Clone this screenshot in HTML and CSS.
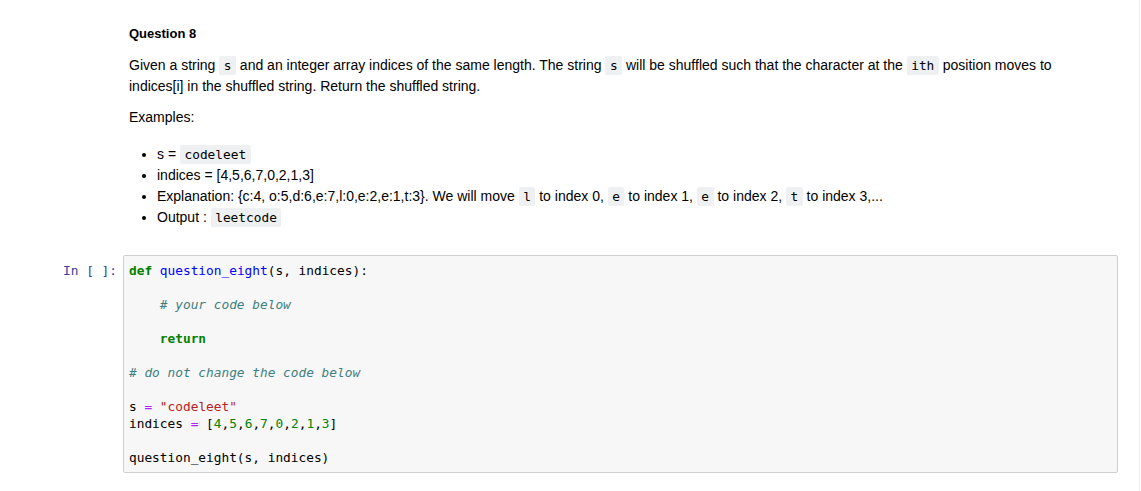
FILE: index.html
```html
<!DOCTYPE html>
<html>
<head>
<meta charset="utf-8">
<link rel="stylesheet" href="styles.css">
</head>
<body>
<div class="notebook">
  <div class="cell text-cell">
    <div class="prompt"></div>
    <div class="rendered">
      <h4 class="q-title">Question 8</h4>
      <p class="para">Given a string <code>s</code> and an integer array indices of the same length. The string <code>s</code> will be shuffled such that the character at the <code>ith</code> position moves to indices[i] in the shuffled string. Return the shuffled string.</p>
      <p class="para">Examples:</p>
      <ul class="examples">
        <li>s = <code>codeleet</code></li>
        <li>indices = [4,5,6,7,0,2,1,3]</li>
        <li>Explanation: {c:4, o:5,d:6,e:7,l:0,e:2,e:1,t:3}. We will move <code>l</code> to index 0, <code>e</code> to index 1, <code>e</code> to index 2, <code>t</code> to index 3,...</li>
        <li>Output : <code>leetcode</code></li>
      </ul>
    </div>
  </div>
  <div class="cell code-cell">
    <div class="prompt in-prompt">In&nbsp;[&nbsp;]:</div>
    <div class="input-area"><pre class="code"><span class="k">def</span> <span class="nf">question_eight</span>(s, indices):

    <span class="c"># your code below</span>

    <span class="k">return</span>

<span class="c"># do not change the code below</span>

s <span class="o">=</span> <span class="s">"codeleet"</span>
indices <span class="o">=</span> [<span class="m">4</span>,<span class="m">5</span>,<span class="m">6</span>,<span class="m">7</span>,<span class="m">0</span>,<span class="m">2</span>,<span class="m">1</span>,<span class="m">3</span>]

question_eight(s, indices)</pre></div>
  </div>
</div>
</body>
</html>
```
FILE: styles.css
```css
html, body {
  margin: 0;
  padding: 0;
  background: #ffffff;
}
body {
  font-family: "Liberation Sans", Arial, sans-serif;
  font-size: 14px;
  color: #000000;
}
.notebook {
  width: 1140px;
  min-height: 491px;
  border-right: 1px solid #eeeeee;
  box-sizing: border-box;
  padding-top: 20px;
}
.cell {
  display: flex;
  margin-right: 21px;
}
.prompt {
  width: 117px;
  flex: none;
  box-sizing: border-box;
}
.in-prompt {
  font-family: "DejaVu Sans Mono", "Liberation Mono", monospace;
  font-size: 12.8px;
  color: #303f9f;
  text-align: right;
  padding-top: 7px;
  padding-right: 6px;
  line-height: 17px;
  width: 123px;
}
.rendered {
  padding-left: 12px;
  padding-right: 10px;
  flex: 1;
}
.q-title {
  margin: 0;
  font-size: 13px;
  font-weight: bold;
  line-height: 28px;
}
.para {
  margin: 7px 0 0 0;
  line-height: 21px;
}
.para + .para {
  margin-top: 10px;
}
code {
  font-family: "DejaVu Sans Mono", "Liberation Mono", monospace;
  font-size: 12.8px;
  background: #eff0f1;
  padding: 2px 4.5px;
  border-radius: 2px;
}
.examples {
  margin: 16px 0 0 0;
  padding-left: 28px;
  line-height: 20.3px;
}
.code-cell {
  margin-top: 27px;
}
.input-area {
  flex: 1;
  background: #f7f7f7;
  border: 1px solid #cfcfcf;
  border-radius: 2px;
}
.code {
  margin: 0;
  padding: 6px 5px;
  font-family: "DejaVu Sans Mono", "Liberation Mono", monospace;
  font-size: 12.8px;
  line-height: 17px;
  color: #000000;
}
.k { color: #008000; font-weight: bold; }
.nf { color: #0000ff; }
.c { color: #408080; font-style: italic; }
.o { color: #aa22ff; }
.s { color: #ba2121; }
.m { color: #008000; }
```
